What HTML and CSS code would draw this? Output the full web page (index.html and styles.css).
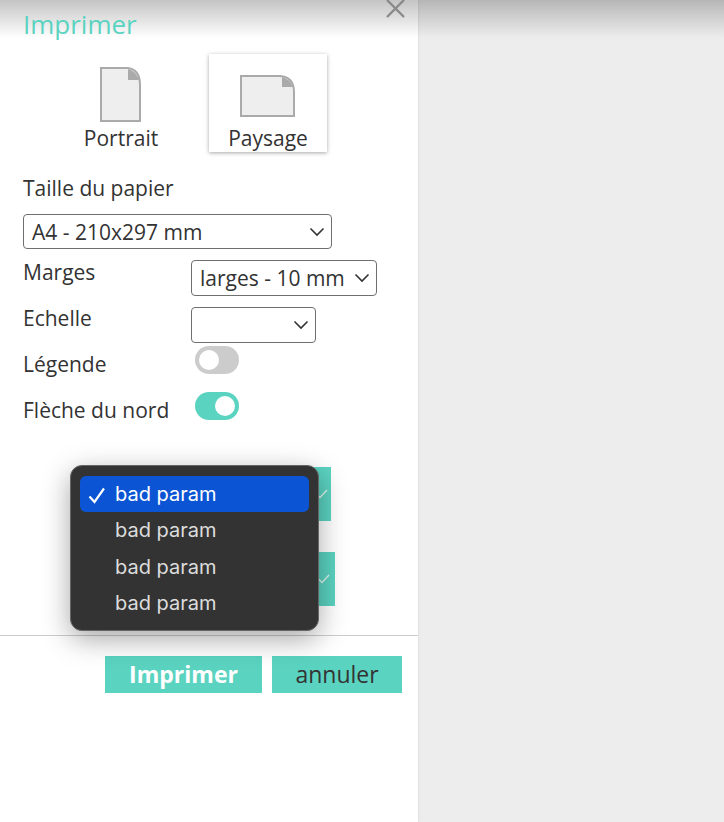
FILE: index.html
```html
<!DOCTYPE html>
<html lang="fr">
<head>
  <meta charset="UTF-8">
  <title>Imprimer</title>
  <link rel="stylesheet" href="styles.css">
</head>
<body>
  <div class="panel">
    <div class="panel-head">
      <h1 class="title">Imprimer</h1>
      <svg class="close" width="20" height="20" viewBox="0 0 20 20"><path d="M1 0 L18 17 M18 0 L1 17" stroke="#8a8a8a" stroke-width="2.4" fill="none"/></svg>
    </div>

    <div class="orientation">
      <div class="orient">
        <svg class="sheet-portrait" width="42" height="55" viewBox="0 0 42 55">
          <path d="M1 1 H27 Q40 2 40 18 V54 H1 Z" fill="#eee" stroke="#aaa" stroke-width="2"/>
          <path d="M28 2 Q36 4 39 13 H28 Z" fill="#aaa"/>
        </svg>
        <span>Portrait</span>
      </div>
      <div class="orient selected">
        <svg class="sheet-landscape" width="56" height="43" viewBox="0 0 56 43">
          <path d="M1 2 H40 Q54 3 54 18 V42 H1 Z" fill="#eee" stroke="#aaa" stroke-width="2"/>
          <path d="M42 3 Q50 5 53 13 H42 Z" fill="#aaa"/>
        </svg>
        <span>Paysage</span>
      </div>
    </div>

    <div class="field-label">Taille du papier</div>
    <div class="select select-paper">
      <span>A4 - 210x297 mm</span>
      <svg class="chevron" width="16" height="10" viewBox="0 0 16 10"><path d="M1.5 1.5 L8 8 L14.5 1.5" fill="none" stroke="#333" stroke-width="1.6"/></svg>
    </div>

    <div class="row">
      <label>Marges</label>
      <div class="select select-margin">
        <span>larges - 10 mm</span>
        <svg class="chevron" width="16" height="10" viewBox="0 0 16 10"><path d="M1.5 1.5 L8 8 L14.5 1.5" fill="none" stroke="#333" stroke-width="1.6"/></svg>
      </div>
    </div>
    <div class="row">
      <label>Echelle</label>
      <div class="select select-scale">
        <span></span>
        <svg class="chevron" width="16" height="10" viewBox="0 0 16 10"><path d="M1.5 1.5 L8 8 L14.5 1.5" fill="none" stroke="#333" stroke-width="1.6"/></svg>
      </div>
    </div>
    <div class="row">
      <label>Légende</label>
      <div class="toggle"><i></i></div>
    </div>
    <div class="row">
      <label>Flèche du nord</label>
      <div class="toggle on"><i></i></div>
    </div>

    <div class="teal-block first">
      <svg width="12" height="10" viewBox="0 0 12 10"><path d="M1 5.5 L4 8.5 L11 1" fill="none" stroke="#dff5f0" stroke-width="1.3"/></svg>
    </div>
    <div class="teal-block second">
      <svg width="12" height="10" viewBox="0 0 12 10"><path d="M1 5.5 L4 8.5 L11 1" fill="none" stroke="#dff5f0" stroke-width="1.3"/></svg>
    </div>

    <hr class="divider">

    <div class="actions">
      <button class="btn btn-print">Imprimer</button>
      <button class="btn btn-cancel">annuler</button>
    </div>

    <ul class="menu">
      <li class="menu-item active">
        <svg class="tick" width="18" height="17" viewBox="0 0 18 17"><path d="M1.5 9.5 L6.5 15 L16 1.5" fill="none" stroke="#fff" stroke-width="2.2"/></svg>
        bad param
      </li>
      <li class="menu-item">bad param</li>
      <li class="menu-item">bad param</li>
      <li class="menu-item">bad param</li>
    </ul>
  </div>
  <div class="backdrop"></div>
  <div class="top-shade"></div>
</body>
</html>
```

FILE: styles.css
```css
* {
  box-sizing: border-box;
}
html, body {
  height: 100%;
}
body {
  margin: 0;
  display: flex;
  overflow: hidden;
  background: #ededed;
  font-family: "Open Sans", "Noto Sans", sans-serif;
  color: #333;
}
.panel {
  position: relative;
  width: 418px;
  height: 822px;
  padding-left: 23px;
  background: #fff;
  box-shadow: 1px 0 2px rgba(0,0,0,.06);
}
.backdrop {
  flex: 1;
}
.top-shade {
  position: absolute;
  top: 0;
  left: 0;
  width: 100%;
  height: 38px;
  background: linear-gradient(180deg, rgba(0,0,0,.23), rgba(0,0,0,0));
  pointer-events: none;
}

.panel-head {
  display: flex;
  justify-content: space-between;
  height: 54px;
  padding-right: 12px;
}
.title {
  margin: 6px 0 0;
  font-size: 26px;
  line-height: 36px;
  font-weight: 400;
  color: #5bd3c1;
  position: relative;
  z-index: 1;
}
.close {
  position: relative;
  z-index: 1;
}

.orientation {
  display: flex;
  gap: 29px;
  margin-left: 39px;
}
.orient {
  width: 118px;
  height: 98px;
  display: flex;
  flex-direction: column;
  align-items: center;
  font-size: 21px;
  line-height: 26px;
}
.orient.selected {
  box-shadow: 0 1px 4px rgba(0,0,0,.35);
}
.sheet-portrait {
  margin-top: 13px;
  margin-bottom: 3px;
}
.sheet-landscape {
  margin-top: 20px;
  margin-bottom: 8px;
}

.field-label {
  margin-top: 23px;
  font-size: 21px;
  line-height: 26px;
}
.select {
  display: flex;
  align-items: center;
  justify-content: space-between;
  height: 36px;
  padding: 0 6px 0 8px;
  border: 1.5px solid #6f6f6f;
  border-radius: 4px;
  background: #fff;
  font-size: 21px;
}
.select-paper {
  width: 309px;
  height: 35px;
  margin-top: 13px;
}
.select-margin {
  width: 186px;
  margin-top: 11px;
}
.select-scale {
  width: 125px;
  margin-top: 12px;
}

.row {
  display: flex;
  height: 46px;
}
.row label {
  width: 168px;
  padding-top: 10px;
  font-size: 21px;
  line-height: 26px;
}
.toggle {
  width: 44px;
  height: 28px;
  margin: 5px 0 0 4px;
  padding: 4px;
  border-radius: 14px;
  background: #ccc;
}
.toggle i {
  display: block;
  width: 20px;
  height: 20px;
  border-radius: 50%;
  background: #fff;
}
.toggle.on {
  background: #5bd3c1;
}
.toggle.on i {
  margin-left: 16px;
}

.teal-block {
  display: flex;
  align-items: center;
  justify-content: flex-end;
  height: 54px;
  margin-left: 77px;
  padding-right: 3px;
  background: #5bd3c1;
}
.teal-block.first {
  width: 231px;
  margin-top: 34px;
}
.teal-block.second {
  width: 235px;
  margin-top: 31px;
  padding-right: 5px;
}

.divider {
  margin: 29px 0 0 -23px;
  border: 0;
  border-top: 1px solid #ccc;
}
.actions {
  display: flex;
  justify-content: flex-end;
  gap: 10px;
  margin-top: 20px;
  padding-right: 16px;
}
.btn {
  height: 37px;
  padding: 0 0 2px;
  border: 0;
  background: #5bd3c1;
  font-family: inherit;
  font-size: 23px;
}
.btn-print {
  width: 157px;
  color: #fff;
  font-weight: 700;
}
.btn-cancel {
  width: 130px;
  color: #333;
}

.menu {
  position: absolute;
  top: 465px;
  left: 70px;
  width: 249px;
  height: 166px;
  margin: 0;
  padding: 10px 9px;
  list-style: none;
  background: #333;
  border: 1.5px solid #666;
  border-radius: 12px;
  box-shadow: 0 8px 28px rgba(0,0,0,.35);
  font-family: Inter, "Liberation Sans", sans-serif;
  font-size: 20px;
  color: #ddd;
}
.menu-item {
  position: relative;
  height: 36.4px;
  padding-left: 35px;
  line-height: 36px;
  border-radius: 6px;
}
.menu-item.active {
  background: #0b55d4;
  color: #fff;
}
.tick {
  position: absolute;
  left: 8px;
  top: 11px;
}
```
